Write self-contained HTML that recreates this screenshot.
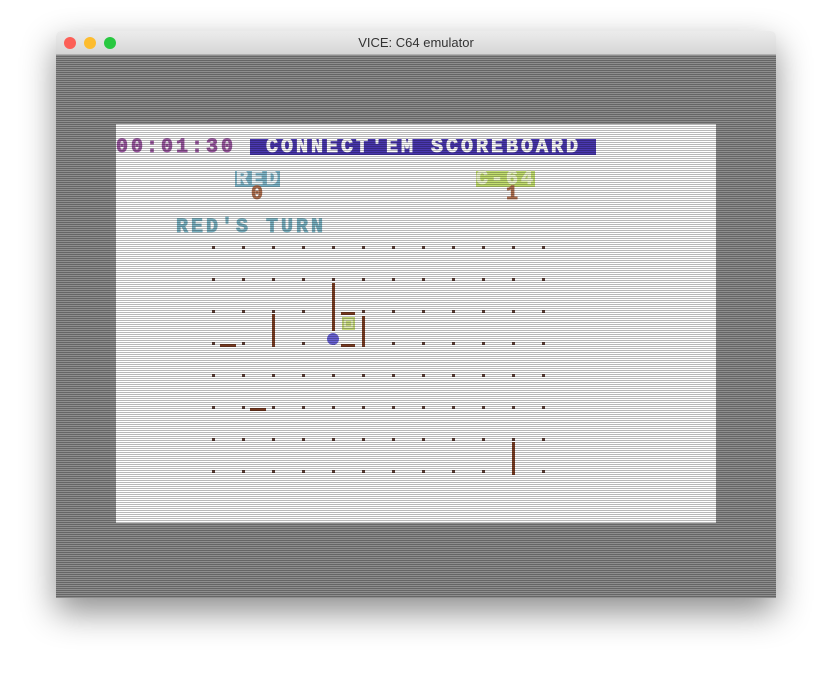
<!DOCTYPE html>
<html><head><meta charset="utf-8"><style>
html,body{margin:0;padding:0;width:832px;height:678px;background:#fff;overflow:hidden;position:relative;font-family:"Liberation Sans",sans-serif}
.win{position:absolute;left:56px;top:31px;width:720px;height:567px;box-shadow:0 14px 34px rgba(0,0,0,.45);border-radius:5px 5px 0 0;overflow:hidden}
.tb{position:absolute;left:0;top:0;width:720px;height:23px;background:linear-gradient(#ececec,#d6d6d6);border-bottom:1px solid #b0b0b0;text-align:center;font-size:13px;line-height:23px;color:#333}
.dot{position:absolute;top:6px;width:12px;height:12px;border-radius:50%}
.content{position:absolute;left:0;top:24px;width:720px;height:543px;background:#8e8e8e;border-bottom:1px solid #222}
.scan{position:absolute;left:0;top:24px;width:720px;height:543px;background:repeating-linear-gradient(to bottom,rgba(0,0,0,0) 0,rgba(0,0,0,0) 1px,rgba(0,0,0,.28) 1px,rgba(0,0,0,.28) 2px)}
.t{position:absolute;font-family:"Liberation Mono",monospace;font-weight:bold;font-size:20px;line-height:16px;letter-spacing:3px;white-space:pre;-webkit-text-stroke:0.8px currentColor}
</style></head><body>
<div class="win">
<div class="tb">VICE: C64 emulator
<div class="dot" style="left:8px;background:#fc5f57"></div>
<div class="dot" style="left:28px;background:#fdbc2e"></div>
<div class="dot" style="left:48px;background:#28c840"></div>
</div>
<div class="content"></div>
</div>
<div style="position:absolute;left:116px;top:124px;width:600px;height:399px;background:#fff"></div>
<div style="position:absolute;left:250px;top:139px;width:346px;height:16px;background:#4a38b0"></div>
<div style="position:absolute;left:235px;top:171px;width:45px;height:16px;background:#80b8cc"></div>
<div style="position:absolute;left:476px;top:171px;width:59px;height:16px;background:#c4e070"></div>
<div class="t" style="left:116px;top:140px;color:#9a58a0">00:01:30</div>
<div class="t" style="left:266px;top:140px;color:#fff">CONNECT'EM SCOREBOARD</div>
<div class="t" style="left:236px;top:172px;color:#eef8fc">RED</div>
<div class="t" style="left:476px;top:172px;color:#f0f8d0">C-64</div>
<div class="t" style="left:251px;top:187px;color:#b07050">0</div>
<div class="t" style="left:506px;top:187px;color:#b07050">1</div>
<div class="t" style="left:176px;top:220px;color:#7ab2c2">RED'S TURN</div>
<svg style="position:absolute;left:0;top:0" width="832" height="678">
<defs><pattern id="p" x="212" y="246" width="30" height="32" patternUnits="userSpaceOnUse"><rect x="0" y="0" width="3" height="3" fill="#5e3e36"/></pattern></defs>
<rect x="200" y="240" width="360" height="240" fill="url(#p)"/>
<g fill="#7a3c22">
<rect x="332" y="283" width="3" height="48"/>
<rect x="220" y="344" width="16" height="3"/>
<rect x="272" y="314" width="3" height="33"/>
<rect x="341" y="312" width="14" height="3"/>
<rect x="341" y="344" width="14" height="3"/>
<rect x="362" y="316" width="3" height="31"/>
<rect x="250" y="408" width="16" height="3"/>
<rect x="512" y="442" width="3" height="33"/>
</g>
<rect x="342" y="317" width="13" height="13" fill="#c8dc7c"/>
<rect x="345" y="320" width="7" height="7" fill="none" stroke="#eef4d0" stroke-width="1.5"/>
<circle cx="333" cy="339" r="6" fill="#6b64d8"/>
</svg>
<div class="scan" style="left:56px;top:55px"></div>
</body></html>
